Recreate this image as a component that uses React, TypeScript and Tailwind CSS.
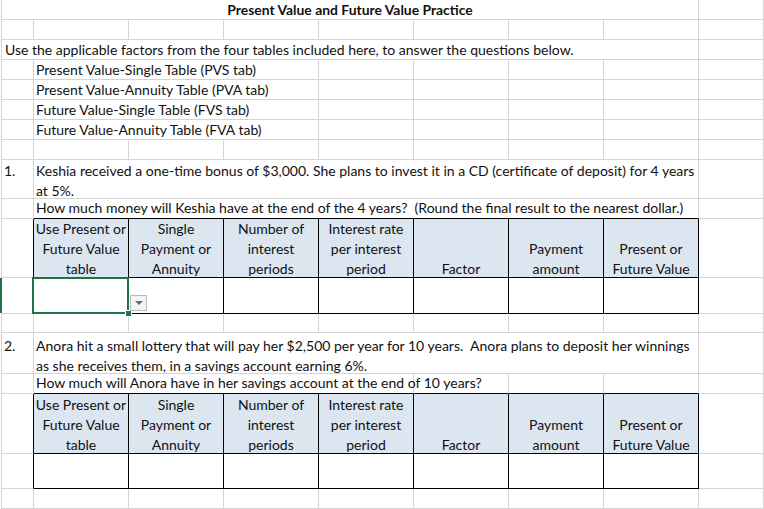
import React from "react";

const grid = "border-r border-b border-[#d4d4d4]";
const tableCell = "border-r border-b border-black";

function Lines({ lines }: { lines: string[] }) {
  return (
    <>
      {lines.map((l, i) => (
        <div key={i} className="whitespace-pre leading-[20px]">
          {l}
        </div>
      ))}
    </>
  );
}

function Empty({ className = grid }: { className?: string }) {
  return <div className={className} />;
}

function Question({
  num,
  text,
  ask,
  askSpan,
  selected,
  topPad,
}: {
  num: string;
  text: string[];
  ask: string;
  askSpan: number;
  selected?: boolean;
  topPad: string;
}) {
  const headers = [
    ["Use Present or", "Future Value", "table"],
    ["Single", "Payment or", "Annuity"],
    ["Number of", "interest", "periods"],
    ["Interest rate", "per interest", "period"],
    ["Factor"],
    ["Payment", "amount"],
    ["Present or", "Future Value"],
  ];
  return (
    <>
      <div className={`${grid} ${topPad} pl-[2px] leading-[20px]`}>{num}</div>
      <div className={`${grid} ${topPad} col-span-7 pl-[2px]`}>
        <Lines lines={text} />
      </div>
      <Empty />

      <Empty />
      <div
        className={`border-r border-b border-r-[#d4d4d4] border-b-black pl-[2px] whitespace-pre leading-[20px] flex items-end ${
          askSpan === 7 ? "col-span-7" : "col-span-4"
        }`}
      >
        {ask}
      </div>
      {askSpan === 4 && (
        <>
          <div className="border-r border-b border-r-[#d4d4d4] border-b-black" />
          <div className="border-r border-b border-r-[#d4d4d4] border-b-black" />
          <div className="border-r border-b border-r-[#d4d4d4] border-b-black" />
        </>
      )}
      <Empty />

      <div className="border-r border-b border-r-black border-b-[#d4d4d4]" />
      {headers.map((h, i) => (
        <div
          key={i}
          className={`${tableCell} bg-[#dce6f1] flex flex-col justify-end items-center text-center`}
        >
          <div className="translate-y-[2px]">
            <Lines lines={h} />
          </div>
        </div>
      ))}
      <Empty />

      <div className="relative border-r border-b border-r-black border-b-[#d4d4d4]">
        {selected && (
          <div className="absolute -left-[2px] top-0 bottom-0 w-[2px] bg-[#217346]" />
        )}
      </div>
      {headers.map((_, i) => (
        <div key={i} className={`${tableCell} relative`}>
          {selected && i === 0 && (
            <>
              <div className="absolute -left-[2px] -top-px -right-px -bottom-px border-2 border-[#217346] z-10" />
              <div className="absolute -right-[4px] -bottom-[4px] w-[7px] h-[7px] bg-[#217346] border border-white z-20" />
              <div className="absolute left-[96px] top-[17px] w-[17px] h-[16px] bg-[#f4f4f4] border border-[#b9b9b9] z-20 flex items-center justify-center">
                <div className="w-0 h-0 border-l-[4px] border-r-[4px] border-t-[4px] border-l-transparent border-r-transparent border-t-[#6b6b6b]" />
              </div>
            </>
          )}
        </div>
      ))}
      <Empty />

      {Array.from({ length: 9 }).map((_, i) => (
        <Empty key={i} />
      ))}
    </>
  );
}

export default function App() {
  return (
    <div className="w-[764px] h-[509px] overflow-hidden bg-white text-[#111] text-[14px] font-['Lato',sans-serif]">
      <div className="ml-px border-l border-[#d4d4d4] grid grid-cols-[32px_repeat(7,95px)_65px] grid-rows-[20px_20px_20px_20px_20px_20px_20px_20px_39px_20px_59px_36px_19px_41px_20px_60px_35px_20px]">
        <div className={`${grid} col-span-8 text-center font-bold text-[13.9px] leading-[20px]`}>
          Present Value and Future Value Practice
        </div>
        <Empty />

        {Array.from({ length: 9 }).map((_, i) => (
          <Empty key={i} />
        ))}

        <div className={`${grid} col-span-8 pl-[3px] leading-[20px]`}>
          Use the applicable factors from the four tables included here, to answer the questions below.
        </div>
        <Empty />

        {[
          "Present Value-Single Table (PVS tab)",
          "Present Value-Annuity Table (PVA tab)",
          "Future Value-Single Table (FVS tab)",
          "Future Value-Annuity Table (FVA tab)",
        ].map((t) => (
          <React.Fragment key={t}>
            <Empty />
            <div className={`${grid} col-span-3 pl-[2px] leading-[20px]`}>{t}</div>
            <Empty />
            <Empty />
            <Empty />
            <Empty />
            <Empty />
          </React.Fragment>
        ))}

        {Array.from({ length: 9 }).map((_, i) => (
          <Empty key={i} />
        ))}

        <Question
          num="1."
          topPad="pt-px"
          text={[
            "Keshia received a one-time bonus of $3,000. She plans to invest it in a CD (certificate of deposit) for 4 years",
            "at 5%.",
          ]}
          ask="How much money will Keshia have at the end of the 4 years?  (Round the final result to the nearest dollar.)"
          askSpan={7}
          selected
        />
        <Question
          num="2."
          topPad="pt-[3px]"
          text={[
            "Anora hit a small lottery that will pay her $2,500 per year for 10 years.  Anora plans to deposit her winnings",
            "as she receives them, in a savings account earning 6%.",
          ]}
          ask="How much will Anora have in her savings account at the end of 10 years?"
          askSpan={4}
        />
      </div>
    </div>
  );
}
